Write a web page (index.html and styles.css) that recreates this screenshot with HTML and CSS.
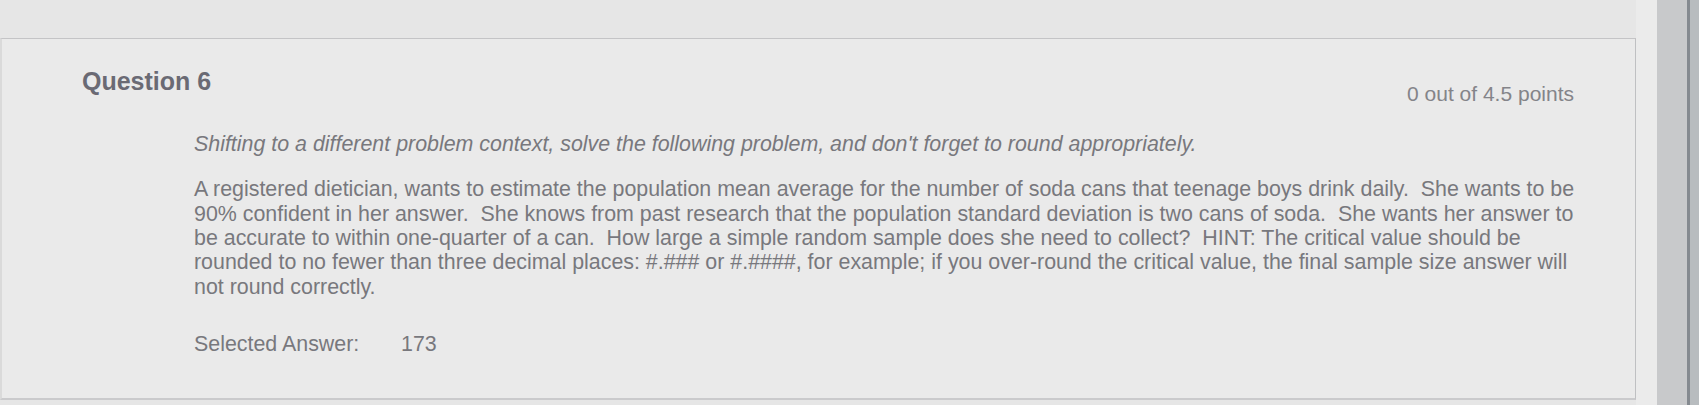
FILE: index.html
```html
<!DOCTYPE html>
<html lang="en">
<head>
<meta charset="utf-8">
<title>Question 6</title>
<link rel="stylesheet" href="styles.css">
</head>
<body>
<div class="screen">
  <div class="main">
    <div class="topgap"></div>
    <div class="panel">
      <div class="header">
        <h2 class="title">Question 6</h2>
        <div class="points">0 out of 4.5 points</div>
      </div>
      <div class="content">
        <p class="instruction">Shifting to a different problem context, solve the following problem, and don't forget to round appropriately.</p>
        <p class="question">A registered dietician, wants to estimate the population mean average for the number of soda cans that teenage boys drink daily.&nbsp; She wants to be 90% confident in her answer.&nbsp; She knows from past research that the population standard deviation is two cans of soda.&nbsp; She wants her answer to be accurate to within one-quarter of a can.&nbsp; How large a simple random sample does she need to collect?&nbsp; HINT: The critical value should be rounded to no fewer than three decimal places: #.### or #.####, for example; if you over-round the critical value, the final sample size answer will not round correctly.</p>
        <div class="answer">
          <span class="label">Selected Answer:</span>
          <span class="value">173</span>
        </div>
      </div>
    </div>
  </div>
  <div class="gutter"></div>
  <div class="scroll">
    <div class="scroll-track"></div>
    <div class="scroll-edge"></div>
    <div class="scroll-rest"></div>
  </div>
</div>
</body>
</html>
```

FILE: styles.css
```css
html, body {
  margin: 0;
  padding: 0;
  height: 100%;
  background: #e6e6e6;
}

body {
  font-family: "Liberation Sans", Arial, sans-serif;
  overflow: hidden;
}

.screen {
  display: flex;
  height: 405px;
  width: 1699px;
}

.main {
  width: 1636px;
  display: flex;
  flex-direction: column;
  background: #e6e6e6;
}

.topgap {
  height: 38px;
  flex: none;
}

.panel {
  flex: 1;
  border-top: 1px solid #c4c4c6;
  border-right: 1px solid #bfc0c2;
  border-bottom: 2px solid #cacacc;
  border-left: 2px solid #dadada;
  background: #eaeaea;
  display: flex;
  flex-direction: column;
  margin-bottom: 5px;
}

.header {
  display: flex;
  justify-content: space-between;
  align-items: flex-start;
  padding: 27px 61px 0 80px;
}

.title {
  margin: 0;
  font-size: 25px;
  line-height: 30px;
  font-weight: bold;
  color: #6a6a74;
}

.points {
  margin-top: 16px;
  font-size: 21px;
  line-height: 24px;
  color: #848489;
}

.content {
  padding-left: 192px;
  padding-top: 27px;
  width: 1396px;
  color: #78787d;
  font-size: 21.4px;
  line-height: 23.4px;
}

.content p {
  margin: 0;
}

.instruction {
  font-style: italic;
}

.question {
  margin-top: 21px !important;
  line-height: 24.3px;
}

.answer {
  margin-top: 34px;
  display: flex;
}

.label {
  width: 207px;
  flex: none;
}

.gutter {
  width: 21px;
  background: #ebebeb;
}

.scroll {
  flex: 1;
  display: flex;
}

.scroll-track {
  width: 30px;
  background: #c8c9cb;
}

.scroll-edge {
  width: 3px;
  background: #858a90;
}

.scroll-rest {
  flex: 1;
  background: #b8bcbf;
}
```
